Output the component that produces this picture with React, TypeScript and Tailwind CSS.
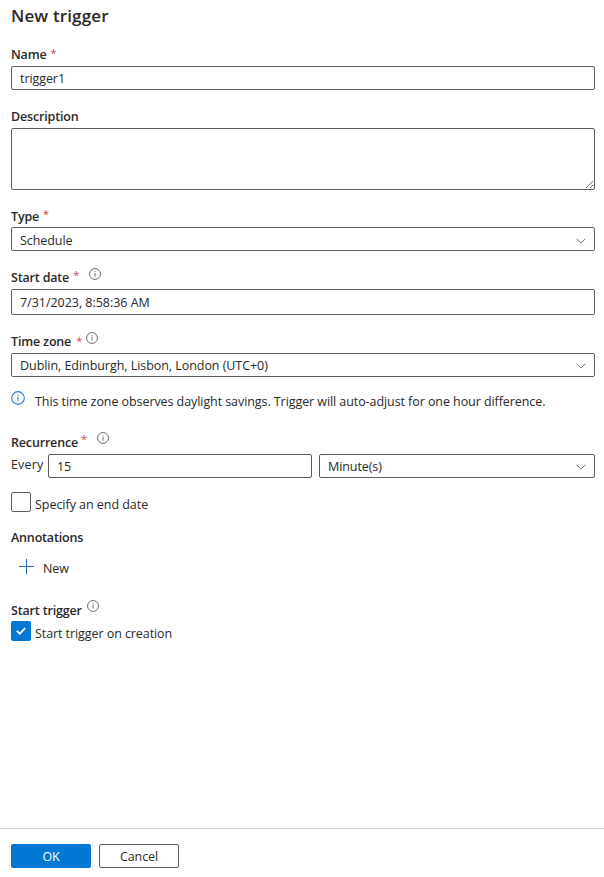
import type { ReactNode } from "react";

const InfoIcon = ({ className = "" }: { className?: string }) => (
  <svg viewBox="0 0 12 12" fill="none" className={`shrink-0 ${className}`}>
    <circle cx="6" cy="6" r="5.45" stroke="currentColor" strokeWidth="0.9" />
    <path d="M6 5v3.6" stroke="currentColor" strokeWidth="0.9" />
    <path d="M6 3.2v1" stroke="currentColor" strokeWidth="0.9" />
  </svg>
);

const ChevronIcon = () => (
  <svg viewBox="0 0 10 6" fill="none" className="mt-0.5 h-1.5 w-2.5 shrink-0 text-[#605e5c]">
    <path d="M0.7 0.8L5 5.1L9.3 0.8" stroke="currentColor" strokeWidth="0.9" />
  </svg>
);

type LabelProps = {
  children: ReactNode;
  className?: string;
  starClass?: string;
  infoClass?: string;
};

const Label = ({ children, className = "", starClass, infoClass }: LabelProps) => (
  <div className={`flex h-5 items-start font-semibold leading-5 tracking-[-0.17px] ${className}`}>
    <span className="whitespace-nowrap">{children}</span>
    {starClass && <span className={`w-[5px] text-[11px] font-normal text-[#c8474b] ${starClass}`}>*</span>}
    {infoClass && <InfoIcon className={`size-3 text-[#605e5c] ${infoClass}`} />}
  </div>
);

const Select = ({ value, className = "" }: { value: string; className?: string }) => (
  <button
    type="button"
    className={`flex h-6 items-center justify-between rounded-[2px] border border-[#605e5c] pr-[8px] pl-2 ${className}`}
  >
    <span className="whitespace-nowrap pt-[3px]">{value}</span>
    <ChevronIcon />
  </button>
);

const inputClass = "block rounded-[2px] border border-[#605e5c] px-2 outline-none";

const App = () => {
  return (
    <div className="flex h-[877px] w-[604px] flex-col bg-white font-['Open_Sans','Noto_Sans',sans-serif] text-[12.5px] tracking-[-0.075px] text-[#292827]">
      <main className="flex flex-1 flex-col pr-[9px] pl-[11px]">
        <h1 className="mt-1 h-6 text-[17px] font-semibold leading-6 tracking-[0.13px]">New trigger</h1>

        <Label className="mt-[17px]" starClass="ml-1 -mt-0.5">Name</Label>
        <input className={`${inputClass} mt-px h-6`} defaultValue="trigger1" />

        <Label className="mt-[17px]">Description</Label>
        <textarea className={`${inputClass} mt-px h-[62px] resize-y`} />

        <Label className="mt-[17px]" starClass="ml-1 -mt-[3px]">Type</Label>
        <Select value="Schedule" className="pt-px" />

        <Label className="mt-[17px]" starClass="ml-1 -mt-[3px]" infoClass="ml-[11px]">Start date</Label>
        <input className={`${inputClass} mt-px h-[26px] tracking-[-0.03px]`} defaultValue="7/31/2023, 8:58:36 AM" />

        <Label className="mt-[17px]" starClass="ml-[5px] -mt-px" infoClass="ml-[5px]">Time zone</Label>
        <Select value="Dublin, Edinburgh, Lisbon, London (UTC+0)" className="mt-px tracking-[-0.05px]" />

        {/* Daylight savings hint */}
        <div className="mt-[14px] flex h-5 items-start">
          <InfoIcon className="size-3.5 text-[#2b78c5]" />
          <p className="ml-2.5 whitespace-nowrap pt-px leading-5">
            This time zone observes daylight savings. Trigger will auto-adjust for one hour difference.
          </p>
        </div>

        <Label className="mt-[22px]" starClass="ml-[3px] -mt-1" infoClass="-mt-px ml-[11px]">Recurrence</Label>
        <div className="mt-px flex">
          <span className="w-[37px] shrink-0 pt-px leading-5 tracking-[0.15px]">Every</span>
          <input className={`${inputClass} h-6 w-[264px]`} defaultValue="15" />
          <Select value="Minute(s)" className="ml-[7px] w-[276px]" />
        </div>

        <label className="mt-[14px] flex h-5">
          <span className="size-5 rounded-[2px] border border-[#605e5c]" />
          <span className="ml-1 pt-[3px] leading-5 tracking-[-0.04px]">Specify an end date</span>
        </label>

        <Label className="mt-4">Annotations</Label>
        <button type="button" className="mt-[11px] flex h-5 items-start pl-2">
          <svg viewBox="0 0 15 15" className="size-[15px] text-[#2564b5]" fill="none">
            <path d="M7.5 0v15M0 7.5h15" stroke="currentColor" />
          </svg>
          <span className="ml-[9px] leading-5">New</span>
        </button>

        <Label className="mt-[22px] tracking-[-0.1px]" infoClass="-mt-px ml-[5px]">Start trigger</Label>
        <label className="flex h-5">
          <span className="flex size-5 items-center justify-center rounded-[2px] bg-[#0078d4]">
            <svg viewBox="0 0 10 8" fill="none" className="h-2 w-2.5">
              <path d="M0.8 3.9L3.7 6.7L9.2 1.1" stroke="white" strokeWidth="1.7" />
            </svg>
          </span>
          <span className="ml-1 pt-[3px] leading-5">Start trigger on creation</span>
        </label>
      </main>

      <footer className="flex h-[49px] gap-2 border-t border-[#d0d0d0] pt-[15px] pl-[11px]">
        <button type="button" className="h-6 w-20 rounded-[2px] bg-[#0078d4] pt-0.5 text-white">OK</button>
        <button type="button" className="h-6 w-20 rounded-[2px] border border-[#605e5c] pt-0.5">Cancel</button>
      </footer>
    </div>
  );
};

export default App;
